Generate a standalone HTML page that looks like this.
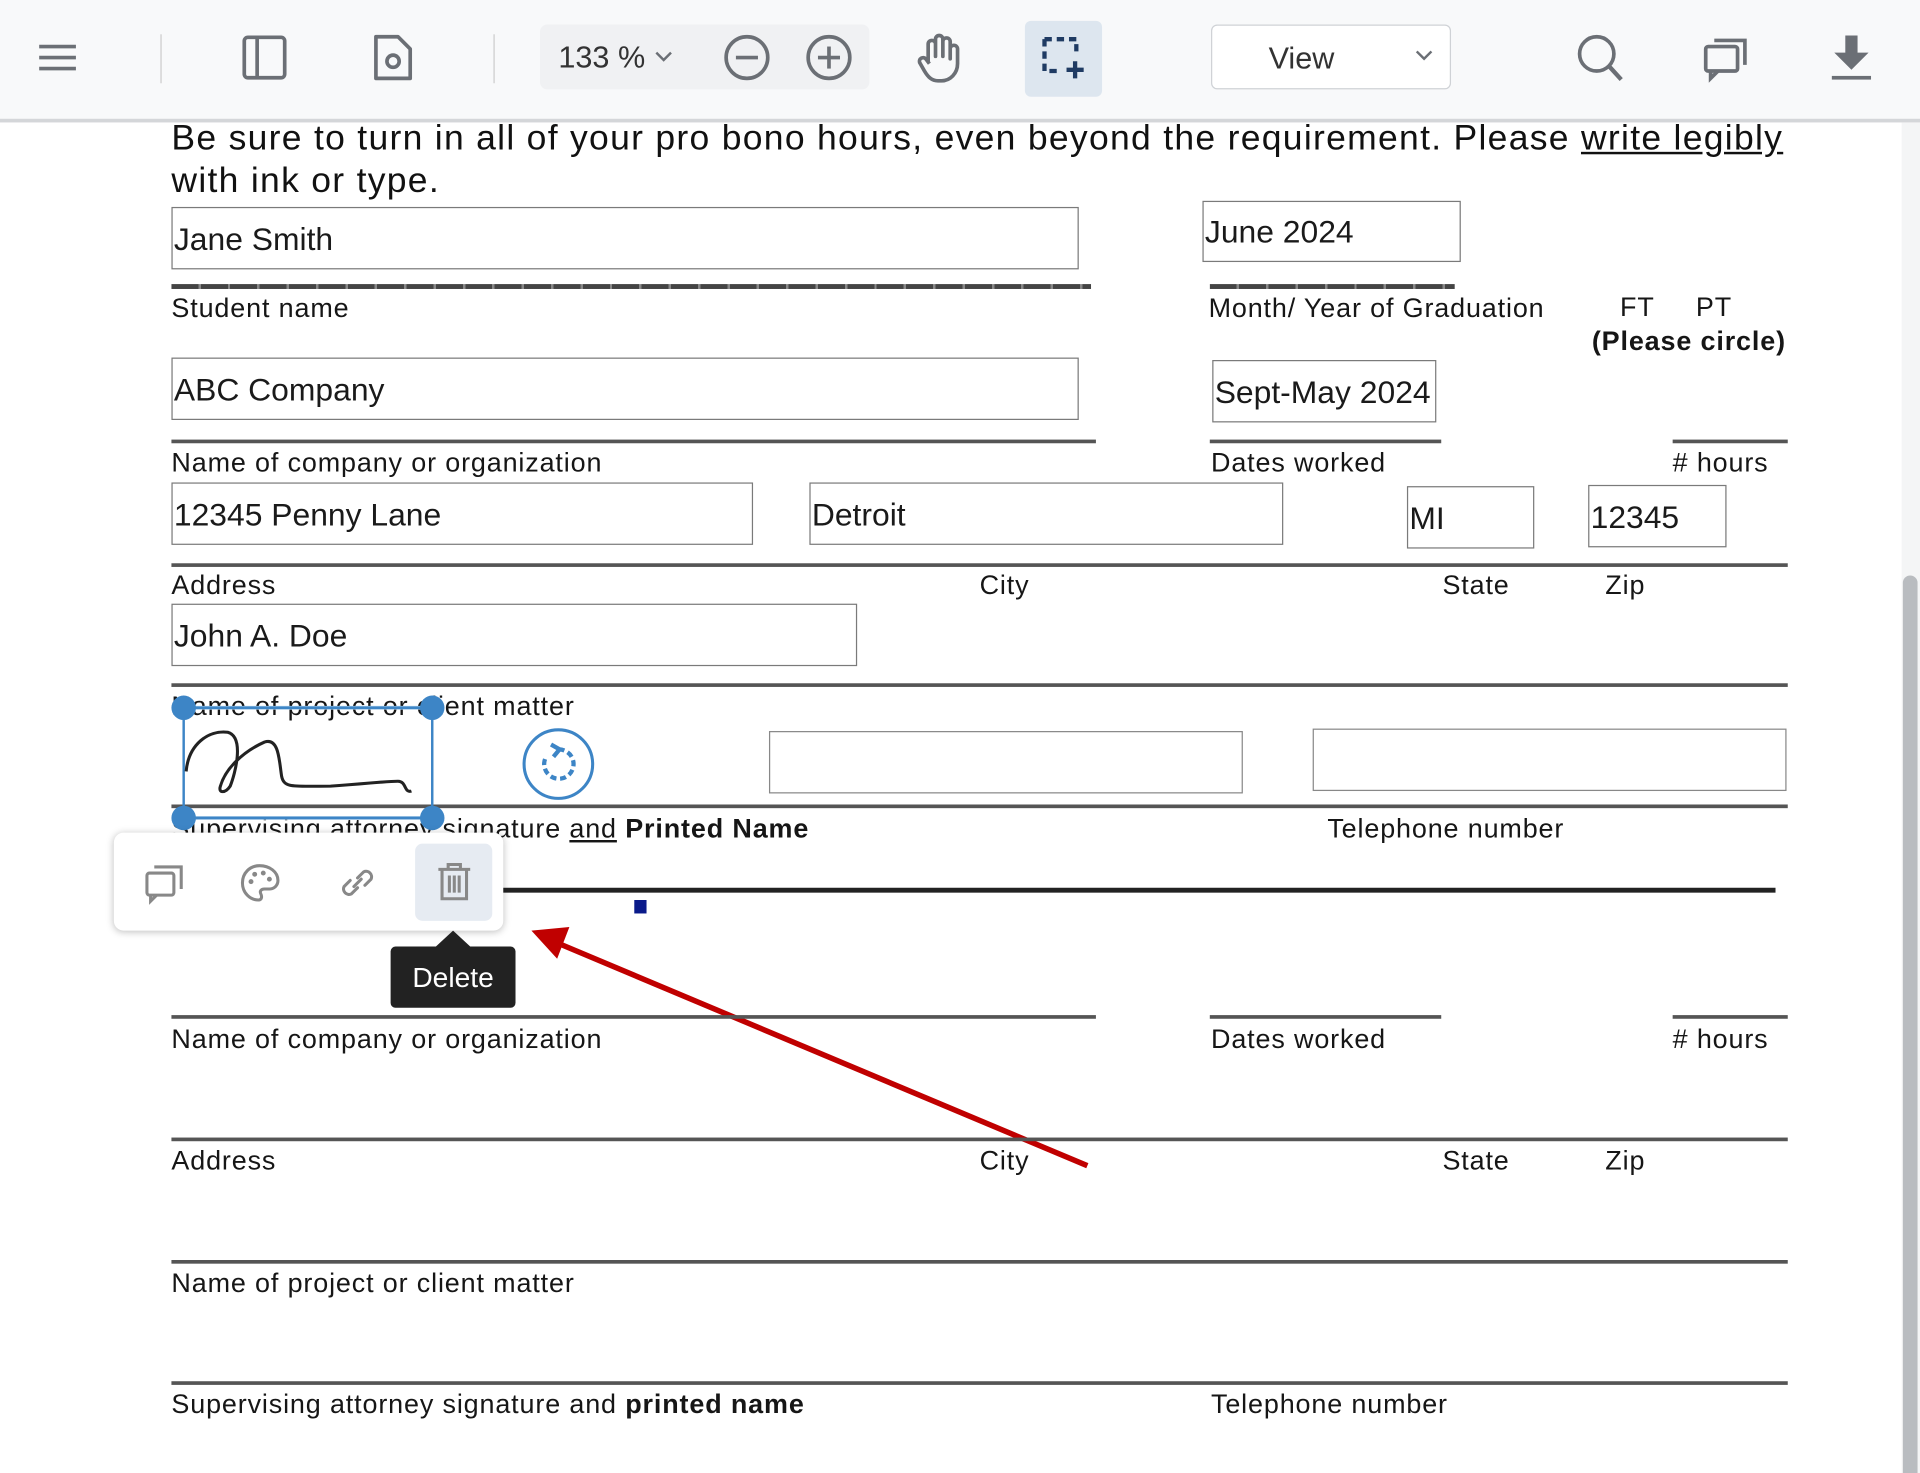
<!DOCTYPE html>
<html><head><meta charset="utf-8"><style>
html,body{margin:0;padding:0;background:#fff;overflow:hidden;}
#root{position:absolute;left:0;top:0;width:1568px;height:1203px;transform:scale(1.22449);transform-origin:0 0;font-family:"Liberation Sans",Arial,sans-serif;color:#111;background:#fff;overflow:hidden;}
.a{position:absolute;white-space:nowrap;}
.tb{position:absolute;left:0;top:0;width:1568px;height:97px;background:#f8f9fa;border-bottom:3px solid #d4d6d9;}
.lab{position:absolute;font-size:22px;line-height:22px;white-space:nowrap;color:#161616;letter-spacing:0.7px;}
.box{position:absolute;border:1.5px solid #7a7a7a;box-sizing:border-box;font-size:26px;line-height:26px;padding-left:1px;display:flex;align-items:center;color:#1a1a1a;}
.ln{position:absolute;height:3px;background:#555;}
svg{position:absolute;overflow:visible;}
</style></head><body><div id="root">
<div class="tb"></div>
<svg style="left:31px;top:35px" width="32" height="26"><g stroke="#6b6f75" stroke-width="3"><line x1="1" y1="3" x2="31" y2="3"/><line x1="1" y1="12" x2="31" y2="12"/><line x1="1" y1="21" x2="31" y2="21"/></g></svg>
<div class="a" style="left:131px;top:28px;width:1px;height:40px;background:#ccc"></div>
<svg style="left:198px;top:29px" width="36" height="36"><rect x="1.5" y="1.5" width="33" height="33" rx="3" fill="none" stroke="#6b6f75" stroke-width="3"/><line x1="12" y1="2" x2="12" y2="34" stroke="#6b6f75" stroke-width="3"/></svg>
<svg style="left:305px;top:28px" width="32" height="38"><path d="M2 2h18l10 10v24H2z" fill="none" stroke="#6b6f75" stroke-width="3" stroke-linejoin="round"/><circle cx="16" cy="22" r="5" fill="none" stroke="#6b6f75" stroke-width="3"/></svg>
<div class="a" style="left:403px;top:28px;width:1px;height:40px;background:#ccc"></div>
<div class="a" style="left:441px;top:20px;width:269px;height:53px;background:#f0f1f3;border-radius:6px"></div>
<div class="a" style="left:456px;top:33px;font-size:25px;color:#333">133 %</div>
<svg style="left:535px;top:42px" width="14" height="9"><path d="M1 1l6 6 6-6" fill="none" stroke="#6b6f75" stroke-width="2"/></svg>
<svg style="left:591px;top:28px" width="38" height="38"><circle cx="19" cy="19" r="17" fill="none" stroke="#6b6f75" stroke-width="3"/><line x1="10" y1="19" x2="28" y2="19" stroke="#6b6f75" stroke-width="3"/></svg>
<svg style="left:658px;top:28px" width="38" height="38"><circle cx="19" cy="19" r="17" fill="none" stroke="#6b6f75" stroke-width="3"/><line x1="10" y1="19" x2="28" y2="19" stroke="#6b6f75" stroke-width="3"/><line x1="19" y1="10" x2="19" y2="28" stroke="#6b6f75" stroke-width="3"/></svg>
<svg style="left:748px;top:26px" width="38" height="42"><path d="M10 24V10a3 3 0 016 0v10V6a3 3 0 016 0v14V8a3 3 0 016 0v14V14a3 3 0 016 0v12c0 8-6 14-13 14h-3c-5 0-8-3-11-8L3 25a3 3 0 015-3l3 4" fill="none" stroke="#6b6f75" stroke-width="3" stroke-linejoin="round"/></svg>
<div class="a" style="left:837px;top:17px;width:63px;height:62px;background:#dde6ef;border-radius:5px"></div>
<svg style="left:851px;top:30px" width="36" height="36"><path d="M2 2h26v14M2 2v26h14" fill="none" stroke="#1f3b63" stroke-width="3.5" stroke-dasharray="6 4"/><path d="M27 20v14M20 27h14" stroke="#1f3b63" stroke-width="3.5"/></svg>
<div class="a" style="left:989px;top:20px;width:196px;height:53px;background:#fff;border:1.5px solid #cfd2d6;border-radius:5px;box-sizing:border-box"></div>
<div class="a" style="left:1036px;top:34px;font-size:25px;color:#333">View</div>
<svg style="left:1156px;top:41px" width="14" height="9"><path d="M1 1l6 6 6-6" fill="none" stroke="#6b6f75" stroke-width="2"/></svg>
<svg style="left:1288px;top:28px" width="40" height="40"><circle cx="16" cy="16" r="14" fill="none" stroke="#6b6f75" stroke-width="3"/><line x1="26" y1="26" x2="36" y2="37" stroke="#6b6f75" stroke-width="3.5"/></svg>
<svg style="left:1391px;top:30px" width="38" height="36"><rect x="2" y="8" width="26" height="20" rx="2" fill="#f8f9fa" stroke="#6b6f75" stroke-width="3"/><path d="M9 3h25v20" fill="none" stroke="#6b6f75" stroke-width="3"/><path d="M6 28v6l6-6" fill="none" stroke="#6b6f75" stroke-width="3"/></svg>
<svg style="left:1494px;top:27px" width="36" height="40"><path d="M13 2h10v14h9L18 30 4 16h9z" fill="#6b6f75"/><rect x="2" y="35" width="32" height="3" fill="#6b6f75"/></svg>
<div class="a" style="left:1553px;top:100px;width:15px;height:1103px;background:#f4f5f6"></div>
<div class="a" style="left:1554px;top:470px;width:12px;height:740px;background:#b9bcc0;border-radius:6px"></div>

<div class="a" style="left:140px;top:96px;font-size:29px;line-height:34px;letter-spacing:1.05px">Be sure to turn in all of your pro bono hours, even beyond the requirement. Please <u>write legibly</u></div>
<div class="a" style="left:140px;top:131px;font-size:29px;line-height:34px;letter-spacing:1.05px">with ink or type.</div>

<div class="box" style="left:140px;top:169px;width:741px;height:51px">Jane Smith</div>
<div class="box" style="left:982px;top:164px;width:211px;height:50px">June 2024</div>
<div class="a" style="left:140px;top:232px;width:751px;height:4px;background:repeating-linear-gradient(90deg,#444 0 22px,#888 22px 24px)"></div>
<div class="a" style="left:988px;top:232px;width:200px;height:4px;background:repeating-linear-gradient(90deg,#444 0 22px,#888 22px 24px)"></div>
<div class="lab" style="left:140px;top:241px">Student name</div>
<div class="lab" style="left:987px;top:241px">Month/ Year of Graduation</div>
<div class="lab" style="left:1323px;top:240px">FT</div>
<div class="lab" style="left:1385px;top:240px">PT</div>
<div class="lab" style="left:1300px;top:268px;font-weight:bold">(Please circle)</div>

<div class="box" style="left:140px;top:292px;width:741px;height:51px">ABC Company</div>
<div class="box" style="left:990px;top:294px;width:183px;height:51px">Sept-May 2024</div>
<div class="ln" style="left:140px;top:359px;width:755px"></div>
<div class="ln" style="left:988px;top:359px;width:189px"></div>
<div class="ln" style="left:1366px;top:359px;width:94px"></div>
<div class="lab" style="left:140px;top:367px">Name of company or organization</div>
<div class="lab" style="left:989px;top:367px">Dates worked</div>
<div class="lab" style="left:1366px;top:367px"># hours</div>

<div class="box" style="left:140px;top:394px;width:475px;height:51px">12345 Penny Lane</div>
<div class="box" style="left:661px;top:394px;width:387px;height:51px">Detroit</div>
<div class="box" style="left:1149px;top:397px;width:104px;height:51px">MI</div>
<div class="box" style="left:1297px;top:396px;width:113px;height:51px">12345</div>
<div class="ln" style="left:140px;top:460px;width:1320px"></div>
<div class="lab" style="left:140px;top:467px">Address</div>
<div class="lab" style="left:800px;top:467px">City</div>
<div class="lab" style="left:1178px;top:467px">State</div>
<div class="lab" style="left:1311px;top:467px">Zip</div>

<div class="box" style="left:140px;top:493px;width:560px;height:51px">John A. Doe</div>
<div class="ln" style="left:140px;top:558px;width:1320px"></div>
<div class="lab" style="left:140px;top:566px">Name of project or client matter</div>

<div class="box" style="left:628px;top:597px;width:387px;height:51px;border-color:#888"></div>
<div class="box" style="left:1072px;top:595px;width:387px;height:51px;border-color:#888"></div>
<div class="ln" style="left:140px;top:657px;width:1320px"></div>
<div class="lab" style="left:140px;top:666px">Supervising attorney signature <u>and</u> <b>Printed Name</b></div>
<div class="lab" style="left:1084px;top:666px">Telephone number</div>

<svg style="left:140px;top:568px" width="230" height="112">
<line x1="10" y1="10" x2="213" y2="10" stroke="#9bc3e6" stroke-width="3"/>
<line x1="10" y1="100" x2="213" y2="100" stroke="#9bc3e6" stroke-width="3"/>
<rect x="10" y="10" width="203" height="90" fill="none" stroke="#3d85c6" stroke-width="2"/>
<path d="M12 62C14 40 30 28 46 30C60 34 52 64 48 74C44 80 38 80 40 74C44 60 58 46 76 38C88 34 88 54 90 66C92 76 100 74 130 74C160 72 175 70 185 70C192 70 190 80 196 78" fill="none" stroke="#222" stroke-width="2.5"/>
<circle cx="10" cy="10" r="10" fill="#3d85c6"/><circle cx="213" cy="10" r="10" fill="#3d85c6"/>
<circle cx="10" cy="100" r="10" fill="#3d85c6"/><circle cx="213" cy="100" r="10" fill="#3d85c6"/>
</svg>
<svg style="left:426px;top:594px" width="60" height="60"><circle cx="30" cy="30" r="28" fill="#fff" stroke="#3d85c6" stroke-width="2.5"/><path d="M30 18a12 12 0 11-10 6" fill="none" stroke="#3d85c6" stroke-width="3.5" stroke-dasharray="5 3"/><path d="M24 14l7 4-5 6" fill="none" stroke="#3d85c6" stroke-width="3.5"/></svg>

<div class="a" style="left:400px;top:725px;width:1050px;height:4px;background:#222"></div>
<div class="a" style="left:518px;top:735px;width:10px;height:11px;background:#0a1a8a"></div>

<div class="a" style="left:93px;top:680px;width:318px;height:80px;background:#fff;border-radius:8px;box-shadow:0 1px 6px rgba(0,0,0,.25)"></div>
<div class="a" style="left:339px;top:689px;width:63px;height:63px;background:#e6ebf2;border-radius:6px"></div>
<svg style="left:118px;top:706px" width="34" height="32"><rect x="2" y="7" width="22" height="18" rx="2" fill="#fff" stroke="#888" stroke-width="2.5"/><path d="M8 2h22v18" fill="none" stroke="#888" stroke-width="2.5"/><path d="M5 25v5l5-5" fill="none" stroke="#888" stroke-width="2.5"/></svg>
<svg style="left:196px;top:705px" width="32" height="32"><path d="M16 2C8 2 2 8 2 16s6 14 13 14c3 0 3-3 2-5-1-2 0-4 3-4h4c4 0 7-3 7-7C31 7 24 2 16 2z" fill="none" stroke="#888" stroke-width="2.5"/><circle cx="9" cy="15" r="2" fill="#888"/><circle cx="12" cy="9" r="2" fill="#888"/><circle cx="19" cy="8" r="2" fill="#888"/><circle cx="24" cy="13" r="2" fill="#888"/></svg>
<svg style="left:276px;top:705px" width="32" height="32"><path d="M13 19l6-6M10 14l-5 5a4.5 4.5 0 006 6l5-5M22 18l5-5a4.5 4.5 0 00-6-6l-5 5" fill="none" stroke="#888" stroke-width="2.5" stroke-linecap="round"/></svg>
<svg style="left:356px;top:704px" width="30" height="32"><path d="M2 6h26M10 6V2h10v4M5 6v24h20V6M11 11v14M15 11v14M19 11v14" fill="none" stroke="#888" stroke-width="2.5"/></svg>
<svg style="left:356px;top:760px" width="28" height="14"><path d="M0 13L14 0L28 13z" fill="#222"/></svg>
<div class="a" style="left:319px;top:773px;width:102px;height:50px;background:#222;border-radius:4px;color:#fff;font-size:23px;line-height:50px;text-align:center">Delete</div>

<svg style="left:0;top:0" width="1568" height="1203"><line x1="888" y1="952" x2="455" y2="770" stroke="#c00000" stroke-width="4.5"/><path d="M434 760L465 757L455 783z" fill="#c00000"/></svg>

<div class="ln" style="left:140px;top:829px;width:755px"></div>
<div class="ln" style="left:988px;top:829px;width:189px"></div>
<div class="ln" style="left:1366px;top:829px;width:94px"></div>
<div class="lab" style="left:140px;top:838px">Name of company or organization</div>
<div class="lab" style="left:989px;top:838px">Dates worked</div>
<div class="lab" style="left:1366px;top:838px"># hours</div>

<div class="ln" style="left:140px;top:929px;width:1320px"></div>
<div class="lab" style="left:140px;top:937px">Address</div>
<div class="lab" style="left:800px;top:937px">City</div>
<div class="lab" style="left:1178px;top:937px">State</div>
<div class="lab" style="left:1311px;top:937px">Zip</div>

<div class="ln" style="left:140px;top:1029px;width:1320px"></div>
<div class="lab" style="left:140px;top:1037px">Name of project or client matter</div>
<div class="ln" style="left:140px;top:1128px;width:1320px"></div>
<div class="lab" style="left:140px;top:1136px">Supervising attorney signature and <b>printed name</b></div>
<div class="lab" style="left:989px;top:1136px">Telephone number</div>
</div></body></html>
